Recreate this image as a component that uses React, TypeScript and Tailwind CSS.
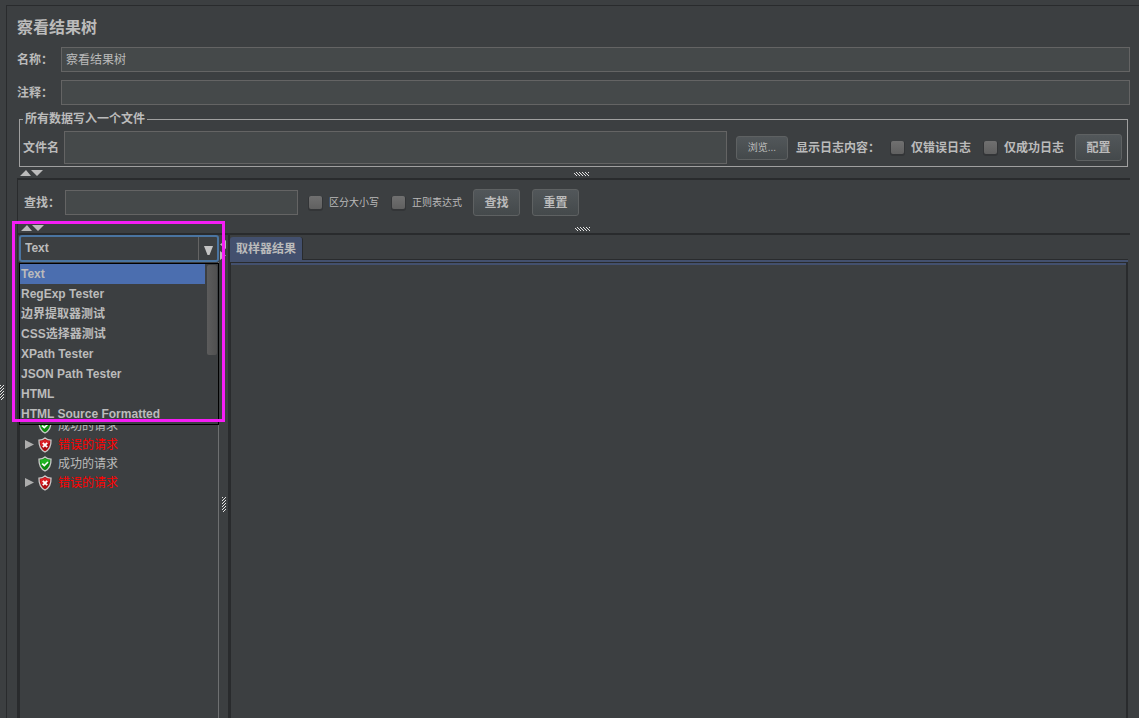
import type { ReactNode } from 'react'
import clsx from 'clsx'

const renderers = [
  'Text',
  'RegExp Tester',
  '边界提取器测试',
  'CSS选择器测试',
  'XPath Tester',
  'JSON Path Tester',
  'HTML',
  'HTML Source Formatted',
]

const samples = [
  { id: 1, label: '成功的请求', ok: true },
  { id: 2, label: '错误的请求', ok: false },
  { id: 3, label: '成功的请求', ok: true },
  { id: 4, label: '错误的请求', ok: false },
]

const GripHorizontal: React.FC = () => (
  <svg width="15" height="4" shapeRendering="crispEdges" aria-hidden="true">
    {Array.from({ length: 15 * 4 }, (_, i) => {
      const x = i % 15
      const y = Math.floor(i / 15)
      return (x - y + 4) % 3 === 0 ? (
        <rect key={i} x={x} y={y} width="1" height="1" fill="#e4e4e4" />
      ) : null
    })}
  </svg>
)

const GripVertical: React.FC = () => (
  <svg width="4" height="15" shapeRendering="crispEdges" aria-hidden="true">
    {Array.from({ length: 15 * 4 }, (_, i) => {
      const x = i % 4
      const y = Math.floor(i / 4)
      return (x + y) % 3 === 0 ? (
        <rect key={i} x={x} y={y} width="1" height="1" fill="#e4e4e4" />
      ) : null
    })}
  </svg>
)

const Splitter: React.FC = () => (
  <div className="flex h-[13px] items-start border-b-2 border-[#292b2d] pt-[3px] pl-[3px]">
    <svg width="23" height="6" aria-hidden="true">
      <path d="M0 6 L6 0 L11 6 Z M11 0 H23 L17 6 Z" fill="#bbbbbb" />
    </svg>
    <div className="flex flex-1 justify-center pt-[2px] pr-[10px]">
      <GripHorizontal />
    </div>
  </div>
)

interface ButtonProps {
  children: ReactNode
  small?: boolean
}

const Button: React.FC<ButtonProps> = ({ children, small }) => (
  <button
    type="button"
    className={clsx(
      'shrink-0 rounded-[3px] border border-[#5e6162] bg-linear-to-b from-[#52575a] to-[#44494b] text-center',
      small ? 'h-6 w-[52px] text-[10px]' : 'h-[27px] w-[47px] font-bold',
    )}
  >
    {children}
  </button>
)

interface CheckboxProps {
  label: string
  small?: boolean
}

const Checkbox: React.FC<CheckboxProps> = ({ label, small }) => (
  <label className="flex shrink-0 items-center gap-[7px]">
    <input
      type="checkbox"
      className="size-[13px] appearance-none rounded-[2px] bg-linear-to-b from-[#707070] to-[#606060] shadow-[0_1px_0_1px_#333537]"
    />
    <span className={small ? 'text-[10px]' : 'font-bold'}>{label}</span>
  </label>
)

const Shield: React.FC<{ ok: boolean }> = ({ ok }) => (
  <svg width="14" height="16" viewBox="0 0 14 16" aria-hidden="true">
    <path
      d="M7 1 C5.5 2.400 3.500 3.200 1 3.200 C0.800 8.500 2.200 12.500 7 15 C11.800 12.500 13.200 8.500 13 3.200 C10.500 3.200 8.500 2.400 7 1 Z"
      fill={ok ? '#0d8a10' : '#b00d12'}
      stroke="#c9c9c9"
      strokeWidth="1.300"
    />
    <path
      d="M7 2.500 C5.500 3.600 4 4.100 2.300 4.200 C2.300 6 2.500 7.500 3 9 C6 9 9 8 11.500 6 L11.700 4.200 C10 4.100 8.500 3.600 7 2.500 Z"
      fill={ok ? '#1fb423' : '#dc2026'}
    />
    {ok ? (
      <path d="M4.200 7.700 L6.300 9.700 L10 6" fill="none" stroke="#fff" strokeWidth="1.600" />
    ) : (
      <path d="M4.800 5.800 L9.200 10.200 M9.200 5.800 L4.800 10.200" fill="none" stroke="#fff" strokeWidth="1.900" />
    )}
  </svg>
)

const textField = 'min-w-0 border border-[#646464] bg-[#45494a] px-1 outline-none'

const RendererPicker: React.FC = () => (
  <div className="relative ml-px">
    <select
      aria-label="Renderer"
      className="block h-[27px] w-full appearance-none rounded-[3px] border-2 border-[#4a74a0] bg-[#3c3f41] pb-[2px] pl-1 font-bold outline-none"
    >
      {renderers.map((name) => (
        <option key={name}>{name}</option>
      ))}
    </select>
    <div className="pointer-events-none absolute top-[2px] right-[2px] flex h-[23px] w-[19px] items-center justify-center border-l border-[#646464] pt-1">
      <svg width="9" height="9" aria-hidden="true">
        <path d="M0 0 H9 L5.500 9 H3.500 Z" fill="#c4c4c4" />
      </svg>
    </div>
    <div className="absolute top-[28px] left-0 z-10 flex w-full border border-black bg-[#3c3f41]">
      <ul role="listbox" aria-label="Renderers" className="flex-1 font-bold">
        {renderers.map((name, i) => (
          <li
            key={name}
            role="option"
            aria-selected={i === 0}
            className={clsx('h-5 pl-px leading-5', i === 0 && 'bg-[#4b6eaf]')}
          >
            {name}
          </li>
        ))}
      </ul>
      <div className="w-[13px] pt-px pl-[2px]">
        <div className="h-[90px] w-[10px] rounded-[2px] bg-linear-to-r from-[#5c5c5c] to-[#505050]" />
      </div>
    </div>
    {/* highlight frame round the open list */}
    <div className="pointer-events-none absolute -top-[14px] -left-[7px] z-20 h-[201px] w-[213px] border-3 border-[#f51df5]" />
  </div>
)

const ResultTree: React.FC = () => (
  <ul className="flex-1 border-r border-l-2 border-r-[#6e7071] border-l-[#292b2d] pt-[154px]">
    {samples.map(({ id, label, ok }) => (
      <li key={id} className="flex h-[19px] items-center pl-[5px]">
        <span className="w-[13px]">
          {!ok && (
            <svg width="9" height="9" aria-hidden="true">
              <path d="M0 0 L9 4.500 L0 9 Z" fill="#adadad" />
            </svg>
          )}
        </span>
        <Shield ok={ok} />
        <span className={clsx('pl-[6px]', !ok && 'text-[#ff0000]')}>{label}</span>
      </li>
    ))}
  </ul>
)

const App: React.FC = () => (
  <div className="flex min-h-screen bg-[#3c3f41] pt-[5px] font-['Liberation_Sans','Noto_Sans_CJK_SC',sans-serif] text-[12px] leading-[14px] text-[#bbbbbb]">
    <div className="w-[6px] shrink-0 pt-[380px]">
      <GripVertical />
    </div>
    <main className="flex min-w-0 flex-1 flex-col border-t border-l border-[#292b2d] pt-[10px] pr-[9px] pl-[10px]">
      <h1 className="text-[16px] leading-6 font-bold">察看结果树</h1>
      <div className="mt-[7px] flex flex-col gap-2">
        <div className="flex items-center">
          <label htmlFor="name" className="w-[44px] shrink-0 font-bold">
            名称：
          </label>
          <input
            id="name"
            defaultValue="察看结果树"
            className={clsx(textField, 'h-[25px] flex-1 pb-[2px]')}
          />
        </div>
        <div className="flex items-center">
          <label htmlFor="comment" className="w-[44px] shrink-0 font-bold">
            注释：
          </label>
          <input id="comment" className={clsx(textField, 'h-[25px] flex-1')} />
        </div>
      </div>
      <fieldset className="mt-[7px] mr-[2px] ml-[2px] min-w-0 border border-[#a0a0a0] pt-[5px] pr-[5px] pb-[2px] pl-[3px]">
        <legend className="px-[2px] font-bold">所有数据写入一个文件</legend>
        <div className="flex items-center">
          <label htmlFor="filename" className="mr-[5px] shrink-0 font-bold">
            文件名
          </label>
          <input id="filename" className={clsx(textField, 'mr-[9px] h-[33px] flex-1')} />
          <Button small>浏览...</Button>
          <span className="mr-[11px] ml-[8px] shrink-0 font-bold">显示日志内容：</span>
          <div className="mr-[11px] flex gap-[13px]">
            <Checkbox label="仅错误日志" />
            <Checkbox label="仅成功日志" />
          </div>
          <Button>配置</Button>
        </div>
      </fieldset>
      <Splitter />
      <section className="flex flex-1 flex-col border-l border-[#292b2d]">
        <div className="flex items-center pt-[9px] pb-[6px] pl-[6px]">
          <label htmlFor="search" className="w-[41px] font-bold">
            查找：
          </label>
          <input id="search" className={clsx(textField, 'mr-[11px] h-[25px] w-[233px]')} />
          <div className="mr-[11px] flex gap-[13px]">
            <Checkbox small label="区分大小写" />
            <Checkbox small label="正则表达式" />
          </div>
          <div className="flex gap-3">
            <Button>查找</Button>
            <Button>重置</Button>
          </div>
        </div>
        <Splitter />
        <div className="flex flex-1">
          <div className="flex w-[201px] shrink-0 flex-col">
            <RendererPicker />
            <ResultTree />
          </div>
          <div className="flex w-[9px] shrink-0 flex-col items-center pt-[5px]">
            <svg width="7" height="20" aria-hidden="true">
              <path d="M6 0 V9 L0 4.500 Z M0 11 V20 L6 15.500 Z" fill="#bbbbbb" />
            </svg>
            <div className="pt-[237px]">
              <GripVertical />
            </div>
          </div>
          <div className="mr-[2px] flex min-w-0 flex-1 flex-col border-l-2 border-[#292b2d] pt-[2px]">
            <div role="tablist" className="flex items-end border-b border-[#292b2d]">
              <button
                type="button"
                role="tab"
                aria-selected="true"
                className="-mb-px h-[23px] rounded-t-[3px] border-r border-[#292b2d] bg-[#43506e] px-[6px] font-bold"
              >
                取样器结果
              </button>
            </div>
            <div className="h-[2px] bg-[#43506e]" />
            <div className="flex-1 border-t border-r-2 border-l border-[#292b2d]">
              <div className="h-[2px] bg-[#43506e]" />
            </div>
          </div>
        </div>
      </section>
    </main>
  </div>
)

export default App
